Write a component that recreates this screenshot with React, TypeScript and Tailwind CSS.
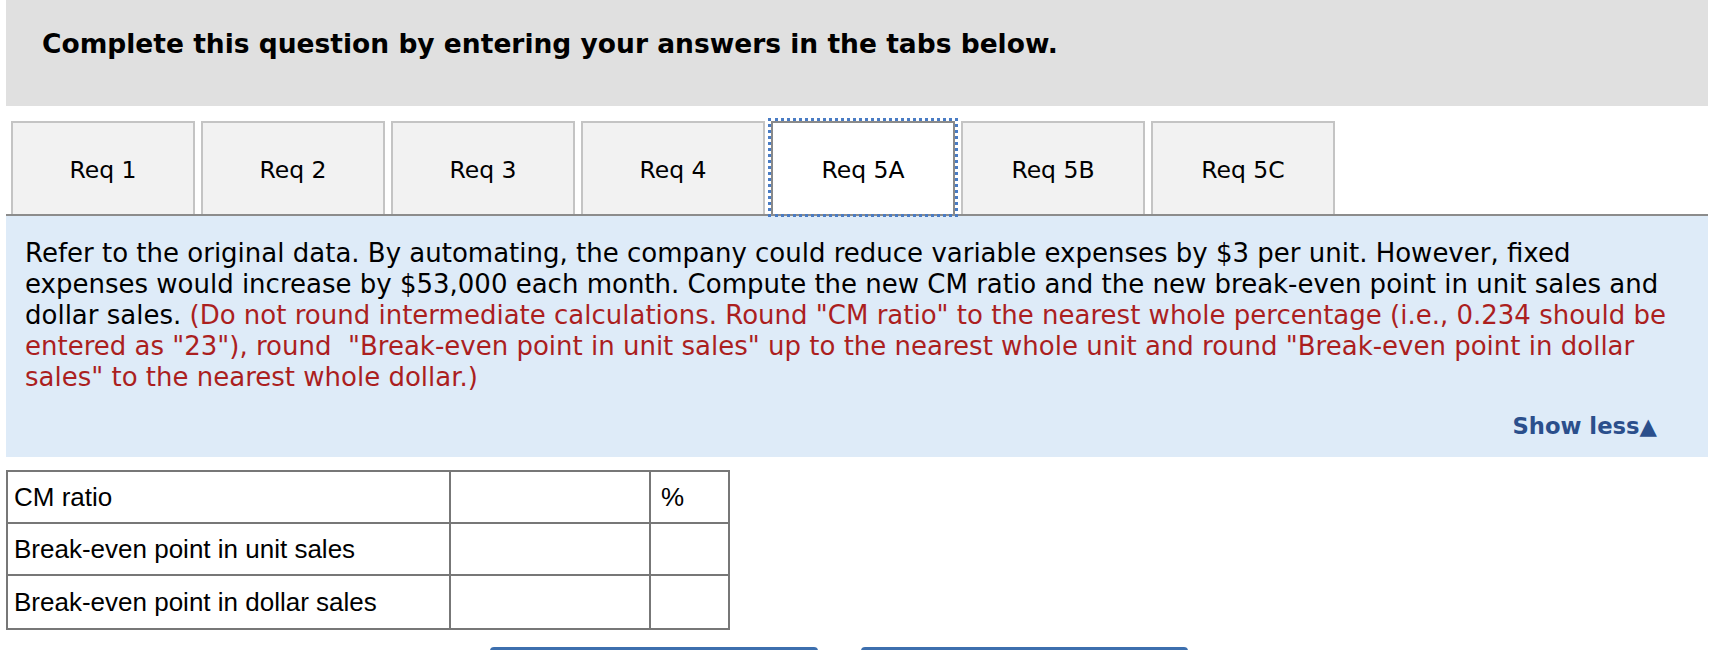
import React from "react";

const tabs = ["Req 1", "Req 2", "Req 3", "Req 4", "Req 5A", "Req 5B", "Req 5C"];

export default function App() {
  return (
    <div className="w-[1716px] h-[650px] overflow-hidden bg-white pl-[6px] pr-[8px]" style={{ fontFamily: '"DejaVu Sans", Verdana, sans-serif' }}>
      <div className="h-[106px] bg-[#e0e0e0] pl-[36px] pt-[28px]">
        <div className="text-[26.5px] font-bold text-black leading-[32px] whitespace-nowrap">
          Complete this question by entering your answers in the tabs below.
        </div>
      </div>
      <div className="mt-[15px] flex gap-[6px] pl-[5px] border-b-2 border-[#8c8c8c]">
        {tabs.map((t) => {
          const active = t === "Req 5A";
          return (
            <div
              key={t}
              className={
                active
                  ? "w-[184px] h-[93px] bg-white border-2 border-[#8a8a8a] border-b-0 outline-dotted outline-[3px] outline-[#4a7cc4] flex items-center justify-center pt-[5px] text-[23.5px] text-black"
                  : "w-[184px] h-[93px] bg-[#f2f2f2] border-2 border-[#c4c4c4] border-b-0 flex items-center justify-center pt-[5px] text-[23.5px] text-black"
              }
            >
              {t}
            </div>
          );
        })}
      </div>
      <div className="h-[241px] bg-[#deebf8] pl-[19px] pr-[10px] pt-[22px] flex flex-col">
        <p className="text-[26px] leading-[31px] text-black whitespace-nowrap">
          Refer to the original data. By automating, the company could reduce variable expenses by $3 per unit. However, fixed
          <br />
          expenses would increase by $53,000 each month. Compute the new CM ratio and the new break-even point in unit sales and
          <br />
          dollar sales.{" "}
          <span className="text-[#ab1f1f]">
            (Do not round intermediate calculations. Round "CM ratio" to the nearest whole percentage (i.e., 0.234 should be
            <br />
            entered as "23"), round&nbsp; "Break-even point in unit sales" up to the nearest whole unit and round "Break-even point in dollar
            <br />
            sales" to the nearest whole dollar.)
          </span>
        </p>
        <div className="flex justify-end mt-[16px] pr-[41px]">
          <span className="text-[22.7px] font-bold text-[#2b4f8c]">Show less▲</span>
        </div>
      </div>
      <div className="mt-[13px] w-[724px]" style={{ fontFamily: '"Liberation Sans", Arial, sans-serif' }}>
        <div className="grid grid-cols-[443px_200px_77px] border-2 border-[#777] text-[26px] text-black">
          {[
            ["CM ratio", "%"],
            ["Break-even point in unit sales", ""],
            ["Break-even point in dollar sales", ""],
          ].map(([label, unit], i) => (
            <React.Fragment key={label}>
              <div className={"h-[52px] flex items-center pl-[6px] border-r-2 border-[#777] " + (i < 2 ? "border-b-2" : "")}>{label}</div>
              <div className={"h-[52px] border-r-2 border-[#777] " + (i < 2 ? "border-b-2" : "")}></div>
              <div className={"h-[52px] flex items-center pl-[10px] border-[#777] " + (i < 2 ? "border-b-2" : "")}>{unit}</div>
            </React.Fragment>
          ))}
        </div>
      </div>
      <div className="mt-[17px] flex gap-[43px] pl-[484px]">
        <div className="w-[328px] h-[40px] rounded-[4px] border-[3px] border-[#3d6fae] bg-white"></div>
        <div className="w-[327px] h-[40px] rounded-[4px] border-[3px] border-[#3d6fae] bg-white"></div>
      </div>
    </div>
  );
}
